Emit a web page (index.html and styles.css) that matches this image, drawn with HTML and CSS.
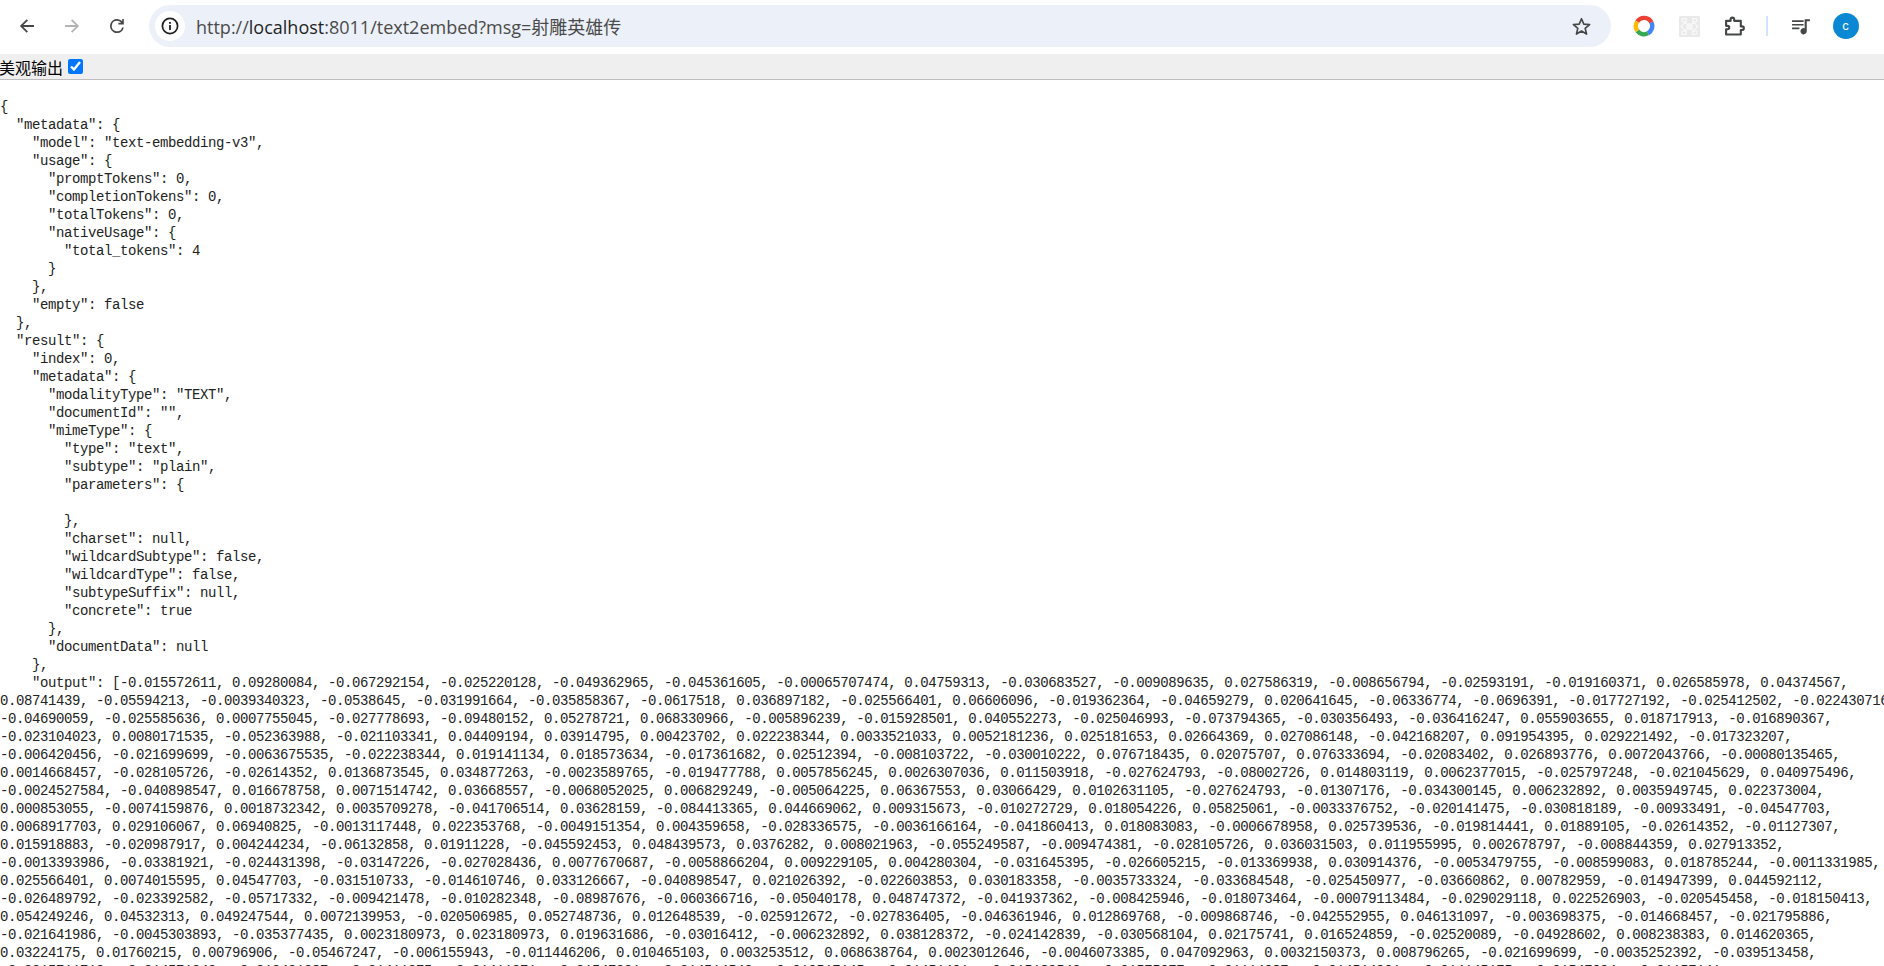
FILE: index.html
```html
<!DOCTYPE html>
<html lang="zh">
<head>
<meta charset="utf-8">
<title>text2embed</title>
<link rel="stylesheet" href="styles.css">
</head>
<body>
<header class="toolbar">
  <nav class="nav">
    <span class="nav-btn"><svg class="nav-icon dark" viewBox="0 0 20 20"><path d="M17 9.1H6.4l4.6-4.6L9.7 3.2 2.9 10l6.8 6.8 1.3-1.3-4.6-4.6H17z"/></svg></span>
    <span class="nav-btn"><svg class="nav-icon muted" viewBox="0 0 20 20"><path d="M3 9.1h10.6L9 4.5l1.3-1.3L17.1 10l-6.8 6.8L9 15.5l4.6-4.6H3z"/></svg></span>
    <span class="nav-btn"><svg class="nav-icon dark" viewBox="0 0 20 20"><path d="M10 17a7 7 0 1 1 5.2-11.7V3h1.6v5.4h-5.4V6.8h2.8A5.3 5.3 0 0 0 10 4.7a5.3 5.3 0 1 0 5.1 6.8h1.7A7 7 0 0 1 10 17z"/></svg></span>
  </nav>
  <div class="omnibox">
    <span class="site-info"><svg class="info-icon" viewBox="0 0 20 20"><circle cx="10" cy="10" r="7.6" fill="none" stroke="#1f1f1f" stroke-width="1.7"/><rect x="9.1" y="9" width="1.8" height="5" fill="#1f1f1f"/><rect x="9.1" y="6" width="1.8" height="1.8" fill="#1f1f1f"/></svg></span>
    <span class="url"><span class="url-dim">http://</span><span class="url-host">localhost</span><span class="url-dim">:8011/text2embed?msg=射雕英雄传</span></span>
    <svg class="star" viewBox="0 0 20 20"><path d="M10 2.6l2.2 5.1 5.5.5-4.2 3.6 1.3 5.4L10 14.3l-4.8 2.9 1.3-5.4-4.2-3.6 5.5-.5z" fill="none" stroke="#474747" stroke-width="1.6" stroke-linejoin="round"/></svg>
  </div>
  <div class="actions">
    <span class="action"><svg class="ring" viewBox="0 0 22 22" fill="none" stroke-width="4.4">
      <path d="M4.2 6.6A8.2 8.2 0 0 1 18.4 7.4" stroke="#ea4335"/>
      <path d="M18.4 7.4A8.2 8.2 0 0 1 15 18.2" stroke="#4285f4"/>
      <path d="M15 18.2A8.2 8.2 0 0 1 4.4 15.9" stroke="#34a853"/>
      <path d="M4.4 15.9A8.2 8.2 0 0 1 4.2 6.6" stroke="#fbbc05"/>
    </svg></span>
    <span class="action"><svg class="tile" viewBox="0 0 20 20"><rect width="20" height="20" rx="1.5" fill="#e9e9e9"/><g fill="none" stroke="#f8f8f8" stroke-width="1.2"><circle cx="10" cy="10" r="2.6"/><path d="M2 10l4-4 4 4 4-4 4 4-4 4-4-4-4 4z"/><rect x="3" y="2.5" width="4" height="3"/><rect x="13" y="2.5" width="4" height="3"/><rect x="3" y="14.5" width="4" height="3"/><rect x="13" y="14.5" width="4" height="3"/></g></svg></span>
    <span class="action"><svg class="puzzle" viewBox="0 0 20 20"><path d="M2 5h4.3V3.6a1.7 1.7 0 0 1 3.4 0V5H16v5.3h1.2a1.7 1.7 0 0 1 0 3.4H16V18H2v-5h1.4a1.6 1.6 0 0 0 0-3.2H2z" transform="translate(0 -.4)" fill="none" stroke="#444746" stroke-width="2" stroke-linejoin="round"/></svg></span>
    <span class="divider"></span>
    <span class="action wide"><svg class="queue" viewBox="0 0 20 20"><path d="M1 4h11v1.6H1zM1 7.5h11v1.6H1zM1 11h7v1.6H1z" fill="#444746"/><path d="M13 3h5v2h-3v9.5a3 3 0 1 1-2-2.8z" fill="#444746"/></svg></span>
    <span class="avatar">c</span>
  </div>
</header>
<div class="option-bar">
  <label class="option">美观输出</label>
  <input class="pretty" type="checkbox" checked>
</div>
<pre class="json">{
  "metadata": {
    "model": "text-embedding-v3",
    "usage": {
      "promptTokens": 0,
      "completionTokens": 0,
      "totalTokens": 0,
      "nativeUsage": {
        "total_tokens": 4
      }
    },
    "empty": false
  },
  "result": {
    "index": 0,
    "metadata": {
      "modalityType": "TEXT",
      "documentId": "",
      "mimeType": {
        "type": "text",
        "subtype": "plain",
        "parameters": {

        },
        "charset": null,
        "wildcardSubtype": false,
        "wildcardType": false,
        "subtypeSuffix": null,
        "concrete": true
      },
      "documentData": null
    },
    "output": [-0.015572611, 0.09280084, -0.067292154, -0.025220128, -0.049362965, -0.045361605, -0.00065707474, 0.04759313, -0.030683527, -0.009089635, 0.027586319, -0.008656794, -0.02593191, -0.019160371, 0.026585978, 0.04374567,
0.08741439, -0.05594213, -0.0039340323, -0.0538645, -0.031991664, -0.035858367, -0.0617518, 0.036897182, -0.025566401, 0.06606096, -0.019362364, -0.04659279, 0.020641645, -0.06336774, -0.0696391, -0.017727192, -0.025412502, -0.022430716,
-0.04690059, -0.025585636, 0.0007755045, -0.027778693, -0.09480152, 0.05278721, 0.068330966, -0.005896239, -0.015928501, 0.040552273, -0.025046993, -0.073794365, -0.030356493, -0.036416247, 0.055903655, 0.018717913, -0.016890367,
-0.023104023, 0.0080171535, -0.052363988, -0.021103341, 0.04409194, 0.03914795, 0.00423702, 0.022238344, 0.0033521033, 0.0052181236, 0.025181653, 0.02664369, 0.027086148, -0.042168207, 0.091954395, 0.029221492, -0.017323207,
-0.006420456, -0.021699699, -0.0063675535, -0.022238344, 0.019141134, 0.018573634, -0.017361682, 0.02512394, -0.008103722, -0.030010222, 0.076718435, 0.02075707, 0.076333694, -0.02083402, 0.026893776, 0.0072043766, -0.00080135465,
0.0014668457, -0.028105726, -0.02614352, 0.0136873545, 0.034877263, -0.0023589765, -0.019477788, 0.0057856245, 0.0026307036, 0.011503918, -0.027624793, -0.08002726, 0.014803119, 0.0062377015, -0.025797248, -0.021045629, 0.040975496,
-0.0024527584, -0.040898547, 0.016678758, 0.0071514742, 0.03668557, -0.0068052025, 0.006829249, -0.005064225, 0.06367553, 0.03066429, 0.0102631105, -0.027624793, -0.01307176, -0.034300145, 0.006232892, 0.0035949745, 0.022373004,
0.000853055, -0.0074159876, 0.0018732342, 0.0035709278, -0.041706514, 0.03628159, -0.084413365, 0.044669062, 0.009315673, -0.010272729, 0.018054226, 0.05825061, -0.0033376752, -0.020141475, -0.030818189, -0.00933491, -0.04547703,
0.0068917703, 0.029106067, 0.06940825, -0.0013117448, 0.022353768, -0.0049151354, 0.004359658, -0.028336575, -0.0036166164, -0.041860413, 0.018083083, -0.0006678958, 0.025739536, -0.019814441, 0.01889105, -0.02614352, -0.01127307,
0.015918883, -0.020987917, 0.004244234, -0.06132858, 0.01911228, -0.045592453, 0.048439573, 0.0376282, 0.008021963, -0.055249587, -0.009474381, -0.028105726, 0.036031503, 0.011955995, 0.002678797, -0.008844359, 0.027913352,
-0.0013393986, -0.03381921, -0.024431398, -0.03147226, -0.027028436, 0.0077670687, -0.0058866204, 0.009229105, 0.004280304, -0.031645395, -0.026605215, -0.013369938, 0.030914376, -0.0053479755, -0.008599083, 0.018785244, -0.0011331985,
0.025566401, 0.0074015595, 0.04547703, -0.031510733, -0.014610746, 0.033126667, -0.040898547, 0.021026392, -0.022603853, 0.030183358, -0.0035733324, -0.033684548, -0.025450977, -0.03660862, 0.00782959, -0.014947399, 0.044592112,
-0.026489792, -0.023392582, -0.05717332, -0.009421478, -0.010282348, -0.08987676, -0.060366716, -0.05040178, 0.048747372, -0.041937362, -0.008425946, -0.018073464, -0.00079113484, -0.029029118, 0.022526903, -0.020545458, -0.018150413,
0.054249246, 0.04532313, 0.049247544, 0.0072139953, -0.020506985, 0.052748736, 0.012648539, -0.025912672, -0.027836405, -0.046361946, 0.012869768, -0.009868746, -0.042552955, 0.046131097, -0.003698375, -0.014668457, -0.021795886,
-0.021641986, -0.0045303893, -0.035377435, 0.0023180973, 0.023180973, 0.019631686, -0.03016412, -0.006232892, 0.038128372, -0.024142839, -0.030568104, 0.02175741, 0.016524859, -0.02520089, -0.04928602, 0.008238383, 0.014620365,
0.03224175, 0.01760215, 0.00796906, -0.05467247, -0.006155943, -0.011446206, 0.010465103, 0.003253512, 0.068638764, 0.0023012646, -0.0046073385, 0.047092963, 0.0032150373, 0.008796265, -0.021699699, -0.0035252392, -0.039513458,
-0.0015711713, -0.014571043, -0.010421087, -0.01411075, -0.01411071, -0.01547201, -0.014514543, -0.010517145, -0.01451401, -0.015189543, -0.01575077, -0.01114087, -0.014514901, -0.014145175, -0.01547094, -0.01157141,
</pre>
</body>
</html>
```
FILE: styles.css
```css
html, body {
  margin: 0;
  padding: 0;
  height: 100%;
  overflow: hidden;
  background: #fff;
}

body {
  display: flex;
  flex-direction: column;
  color: #000;
  font-family: "Liberation Sans", "Noto Sans CJK SC", sans-serif;
}

.toolbar {
  flex: none;
  height: 54px;
  display: flex;
  align-items: flex-start;
  background: #fff;
  box-sizing: border-box;
  padding-top: 5px;
}

.nav {
  display: flex;
  gap: 9px;
  padding-left: 9px;
  margin-right: 14px;
}

.nav-btn {
  width: 36px;
  height: 42px;
  display: flex;
  align-items: center;
  justify-content: center;
}

.nav-icon {
  width: 20px;
  height: 20px;
}

.dark { fill: #474747; }
.muted { fill: #b4b4b4; }

.omnibox {
  flex: 1;
  height: 42px;
  display: flex;
  align-items: center;
  background: #ecf1f9;
  border-radius: 21px;
  padding: 0 19px 0 6px;
}

.site-info {
  width: 30px;
  height: 30px;
  border-radius: 50%;
  background: #fff;
  display: flex;
  align-items: center;
  justify-content: center;
  margin-right: 11px;
}

.info-icon {
  width: 20px;
  height: 20px;
}

.url {
  flex: 1;
  font-family: "Open Sans", "Noto Sans CJK SC", sans-serif;
  font-size: 18px;
  white-space: nowrap;
}

.url-dim { color: #4a4a4a; }
.url-host { color: #1f1f1f; }

.star {
  width: 21px;
  height: 21px;
}

.actions {
  display: flex;
  align-items: center;
  height: 42px;
  width: 273px;
  box-sizing: border-box;
  padding: 0 20px 0 10px;
}

.action {
  width: 45.5px;
  height: 42px;
  display: flex;
  align-items: center;
  justify-content: center;
}

.action.wide {
  width: 52px;
}

.ring {
  width: 22px;
  height: 22px;
}

.tile {
  width: 21px;
  height: 21px;
}

.puzzle {
  width: 21px;
  height: 21px;
}

.queue {
  width: 21px;
  height: 21px;
}

.divider {
  width: 2px;
  height: 20px;
  margin: 0 8px;
  background: #d3e3fd;
}

.avatar {
  width: 26px;
  height: 26px;
  margin-left: 5px;
  border-radius: 50%;
  background: #0b88d4;
  color: #fff;
  font-size: 13px;
  line-height: 25px;
  text-align: center;
}

.option-bar {
  flex: none;
  height: 26px;
  display: flex;
  align-items: center;
  box-sizing: border-box;
  background: #efefef;
  border-bottom: 1px solid #bdbdbd;
  font-size: 16px;
}

.option {
  margin-left: -1px;
  font-family: "Noto Sans CJK SC", sans-serif;
  line-height: 20px;
}

.pretty {
  width: 15px;
  height: 15px;
  margin: 0 0 0 5px;
  accent-color: #0075ff;
}

.json {
  margin: 0;
  padding-top: 18px;
  font-family: "Liberation Mono", monospace;
  font-size: 14px;
  letter-spacing: -0.4px;
  line-height: 18px;
  color: #222;
  white-space: pre;
}
```
